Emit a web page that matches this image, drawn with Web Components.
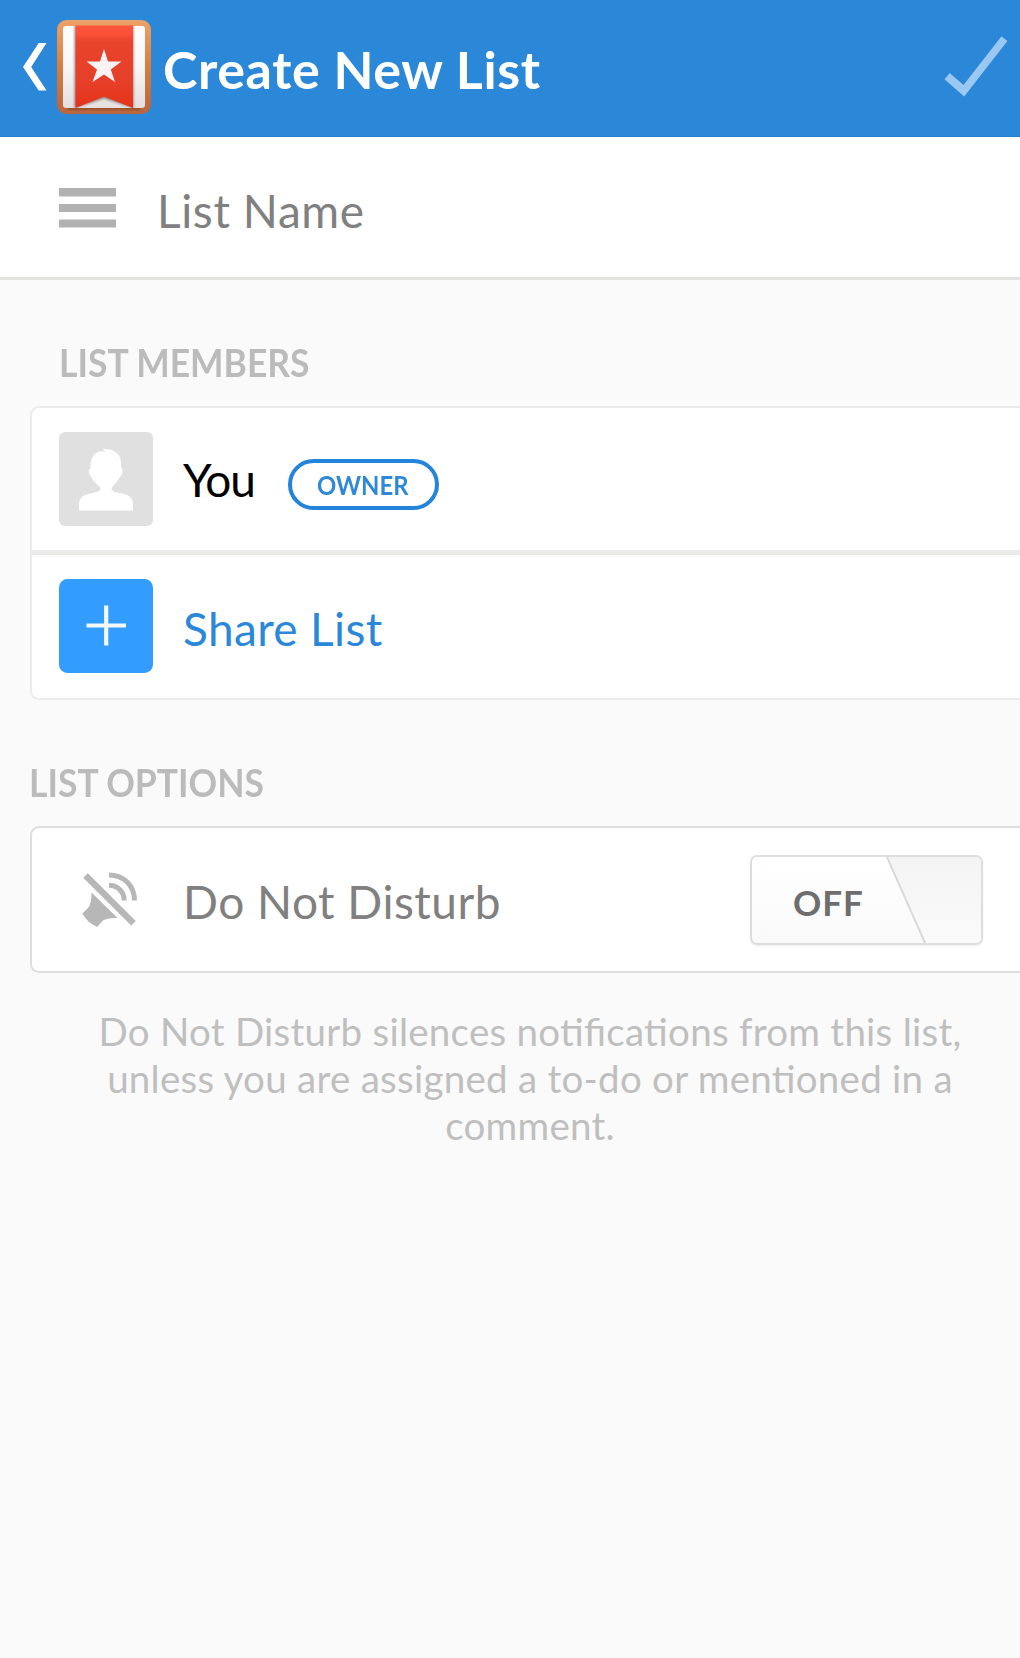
<!DOCTYPE html>
<html lang="en">
<head>
<meta charset="utf-8">
<title>Create New List</title>
<style>
    html, body { margin: 0; min-height: 100%; background: #fafafa; }
    body { font-family: Lato, "Liberation Sans", sans-serif; overflow: hidden; }
</style>
</head>
<body>
<create-list-page></create-list-page>

<script>
/** Small base: every element only supplies its own template. */
class BaseElement extends HTMLElement {
    constructor() {
        super();
        this.attachShadow({ mode: 'open' });
    }

    connectedCallback() {
        this.shadowRoot.innerHTML = this.template();
    }
}

/** Inline SVG icons: <list-icon name="menu"></list-icon> */
const ICONS = {
    back: `
        <svg width="24" height="48" viewBox="0 0 24 48">
            <path d="M15.700 0H23.500L8.200 24L23.500 47.500H15.700L0 24Z" fill="#fff"/>
        </svg>`,
    logo: `
        <svg width="94" height="94" viewBox="0 0 94 94">
            <defs>
                <linearGradient id="frame" x2="0" y2="1">
                    <stop offset="0" stop-color="#eda267"/>
                    <stop offset=".45" stop-color="#d98142"/>
                    <stop offset="1" stop-color="#b9643c"/>
                </linearGradient>
                <linearGradient id="paper" x2="0" y2="1">
                    <stop offset="0" stop-color="#fff"/>
                    <stop offset=".5" stop-color="#f8f6f6"/>
                    <stop offset="1" stop-color="#e5dfde"/>
                </linearGradient>
                <linearGradient id="ribbon" x2="0" y2="1">
                    <stop offset="0" stop-color="#fe563d"/>
                    <stop offset=".1" stop-color="#fb5139"/>
                    <stop offset=".2" stop-color="#e8432b"/>
                    <stop offset=".65" stop-color="#e7402a"/>
                    <stop offset="1" stop-color="#e5331b"/>
                </linearGradient>
                <filter id="soft" x="-20%" y="-20%" width="140%" height="140%">
                    <feGaussianBlur stdDeviation="1"/>
                </filter>
                <clipPath id="page"><rect x="6" y="6" width="82" height="82" rx="3"/></clipPath>
            </defs>
            <rect width="94" height="94" rx="9.500" fill="url(#frame)"/>
            <rect x="10" y="85" width="74" height="5" rx="2" fill="#8a4a2b" opacity=".7" filter="url(#soft)"/>
            <rect x="6" y="6" width="82" height="82" rx="3" fill="url(#paper)"/>
            <g clip-path="url(#page)">
                <path d="M17.500 5H76.500V88L47 78.500L17.500 88Z" fill="#4a2a26" opacity=".55" filter="url(#soft)"/>
            </g>
            <path d="M18.500 5.500H76V88L47 76.500L18.500 88Z" fill="url(#ribbon)"/>
            <path d="M47 29L51 41.500H64.500L53.800 49.500L58 62L47 54.500L35.500 62L40 49.500L29.500 41.500H43Z" fill="#faf3f3"/>
        </svg>`,
    check: `
        <svg width="64" height="62" viewBox="0 0 64 62">
            <path d="M0.500 43.200L5.700 37L19.500 49L57.500 0.200L63.400 5L20.200 60.500Z" fill="#9ac8f0"/>
        </svg>`,
    menu: `
        <svg width="57" height="40" viewBox="0 0 57 40">
            <path d="M0 0H57V8.500H0ZM0 16H57V24H0ZM0 31.500H57V39.500H0Z" fill="#b1b1b1"/>
        </svg>`,
    person: `
        <svg width="94" height="94" viewBox="0 0 94 94">
            <rect width="94" height="94" rx="6" fill="#e0e0e0"/>
            <path d="M43.500 16Q46 17.500 49 17.200C57 18 62 23.500 62 31Q62 34 62.300 36Q64 36.500 63.500 39.500Q63 43.500 61 44.500C58.500 50 54.500 53 52.500 56C52.500 58.500 55 60 60 61C68 62.500 74 64 74 73V78.500H20V73C20 64 26 62.500 34 61C39 60 41.500 58.500 41.500 56C39 52.500 34 49.500 32 44.500Q29.500 42.500 29.800 38.500Q30 37 31.500 36.500C31.500 32 31.500 27 35 23Q38 19 43.500 19.200Q46 19.500 47 19.800Q44.500 18.500 43.500 16Z" fill="#fff"/>
        </svg>`,
    plus: `
        <svg width="94" height="94" viewBox="0 0 94 94">
            <rect width="94" height="94" rx="8.500" fill="#339dff"/>
            <path d="M27.500 46.500H67M47.200 26.500V66.500" stroke="#f3f8fd" stroke-width="4.200"/>
        </svg>`,
    muted: `
        <svg width="56" height="56" viewBox="0 0 56 56" fill="none">
            <path d="M9.500 20.500L35.500 46C27 46 22 47 19.500 50L15 55Q10 52.500 6.500 49.500Q3 46 0.300 41.500L6 36Q9.500 32 9.500 20.500Z" fill="#b7b7b7"/>
            <path d="M3.500 3.500L51.500 51.300" stroke="#b7b7b7" stroke-width="6.500"/>
            <path d="M27 3C42 3 52.500 14 52.500 28.500M27 13.200C36 13.200 42.200 20 42.200 28.500" stroke="#b7b7b7" stroke-width="5"/>
        </svg>`
};

class ListIcon extends BaseElement {
    template() {
        return `
            <style>
                :host { display: block; flex: none; }
                svg { display: block; }
            </style>
            ${ICONS[this.getAttribute('name')] || ''}
        `;
    }
}

/** Blue top bar with back arrow, logo, title and confirm action. */
class AppHeader extends BaseElement {
    template() {
        return `
            <style>
                :host {
                    display: flex;
                    align-items: center;
                    box-sizing: border-box;
                    height: 137px;
                    padding: 0 12px 0 23px;
                    background: #2b88d9;
                    border-bottom: 1px solid #2482d6;
                    color: #fff;
                }
                .logo { margin: -2px 12px 0 10px; }
                .back { margin-top: -2px; }
                .check { margin-top: -2px; }
                h1 {
                    flex: 1;
                    margin: 2px 0 0;
                    font-size: 52px;
                    line-height: 60px;
                    font-weight: 700;
                    letter-spacing: 0.6px;
                    white-space: nowrap;
                }
            </style>
            <list-icon class="back" name="back"></list-icon>
            <list-icon class="logo" name="logo"></list-icon>
            <h1><slot></slot></h1>
            <list-icon class="check" name="check"></list-icon>
        `;
    }
}

/** Name input row under the header. */
class NameField extends BaseElement {
    template() {
        return `
            <style>
                :host {
                    display: flex;
                    align-items: center;
                    box-sizing: border-box;
                    height: 143px;
                    padding-left: 59px;
                    background: #fff;
                    border-bottom: 3px solid #e3e3e1;
                    color: #808080;
                    font-size: 46px;
                    line-height: 56px;
                    letter-spacing: 0.6px;
                }
                list-icon { margin: 2px 41px 0 0; }
                span { padding-top: 7px; }
            </style>
            <list-icon name="menu"></list-icon>
            <span><slot></slot></span>
        `;
    }
}

/** Section heading with a card that runs off the right edge. */
class ListSection extends BaseElement {
    template() {
        return `
            <style>
                :host { display: block; padding-left: 30px; }
                h2 {
                    margin: 0 0 0 var(--heading-indent, -1px);
                    font-size: 38px;
                    line-height: 46px;
                    font-weight: 700;
                    color: #bbb;
                    white-space: nowrap;
                    /* condensed caps */
                    transform: scaleX(.933);
                    transform-origin: 0 50%;
                }
                .card {
                    margin-top: 21px;
                    background: #fff;
                    border: 2px solid var(--card-border, #ebebeb);
                    border-right: 0;
                    border-radius: 9px 0 0 9px;
                }
            </style>
            <h2>${this.getAttribute('heading')}</h2>
            <div class="card"><slot></slot></div>
        `;
    }
}

class ListRow extends BaseElement {
    template() {
        return `
            <style>
                :host {
                    display: flex;
                    align-items: center;
                    box-sizing: border-box;
                    height: var(--row-height, 143px);
                    padding: 0 37px 0 27px;
                    font-size: 46px;
                    line-height: 56px;
                    color: #000;
                }
                :host([divided]) { border-bottom: 5px solid #ebebe9; }
                .icon {
                    display: flex;
                    justify-content: center;
                    width: 94px;
                    margin-right: 30px;
                }
                list-icon { margin: var(--icon-margin, 0); }
                .label {
                    padding-top: var(--label-drop, 5px);
                    letter-spacing: var(--label-spacing, 0.5px);
                    white-space: nowrap;
                }
                .end { margin-left: auto; }
            </style>
            <div class="icon"><list-icon name="${this.getAttribute('icon')}"></list-icon></div>
            <div class="label"><slot></slot></div>
            <slot name="badge"></slot>
            <div class="end"><slot name="end"></slot></div>
        `;
    }
}

class RoleBadge extends BaseElement {
    template() {
        return `
            <style>
                :host {
                    display: flex;
                    align-items: center;
                    justify-content: center;
                    box-sizing: border-box;
                    width: 151px;
                    height: 51px;
                    margin: 11px 0 0 33px;
                    border: 4px solid #2484dc;
                    border-radius: 26px;
                    color: #3088d9;
                    font-size: 26.500px;
                    line-height: 32px;
                    font-weight: 700;
                }
                span { transform: scaleX(.9); }
            </style>
            <span><slot></slot></span>
        `;
    }
}

/** Two-part switch with a slanted divider. */
class SlantToggle extends BaseElement {
    template() {
        return `
            <style>
                :host {
                    display: grid;
                    box-sizing: border-box;
                    width: 233px;
                    height: 90px;
                    margin-top: 1px;
                    border: 2px solid #dedede;
                    border-radius: 7px;
                    overflow: hidden;
                    background: linear-gradient(#fff, #fafafa);
                    box-shadow: 0 1px 2px rgba(0, 0, 0, .08);
                }
                svg, .state { grid-area: 1 / 1; }
                .state {
                    align-self: center;
                    padding: 3px 0 0 41px;
                    font-size: 35px;
                    line-height: 42px;
                    font-weight: 700;
                    letter-spacing: 1px;
                    color: #6e6e6e;
                }
            </style>
            <svg width="229" height="86" viewBox="0 0 229 86">
                <defs>
                    <linearGradient id="track" x2="0" y2="1">
                        <stop offset="0" stop-color="#f4f4f4"/>
                        <stop offset="1" stop-color="#fafafa"/>
                    </linearGradient>
                </defs>
                <path d="M135 0H229V86H173Z" fill="url(#track)"/>
                <path d="M134.500 -1L173.500 87" stroke="#d9d9d9" stroke-width="2"/>
            </svg>
            <div class="state"><slot></slot></div>
        `;
    }
}

class HelpText extends BaseElement {
    template() {
        return `
            <style>
                :host {
                    display: block;
                    padding: 0 45px 0 85px;
                    text-align: center;
                    font-size: 38.500px;
                    line-height: 47.200px;
                    letter-spacing: 0.26px;
                    /* keep the ligatures that letter-spacing turns off */
                    font-feature-settings: "liga" 1;
                    color: #bfbfbf;
                }
            </style>
            <slot></slot>
        `;
    }
}

class CreateListPage extends BaseElement {
    template() {
        return `
            <style>
                :host { display: block; width: 1020px; height: 1658px; background: #fafafa; }
                .members { margin-top: 59px; --heading-indent: 29px; }
                .options { margin-top: 59px; --card-border: #dedede; }
                .members list-row[divided] {
                    --row-height: 147px;
                    --label-spacing: -1.3px;
                    --label-drop: 1px;
                }
                .members list-row[icon="plus"] {
                    --icon-margin: -2px 0 0;
                    --label-spacing: 0.35px;
                }
                .options list-row { --icon-margin: 0 0 0 7px; }
                .share { color: #2b88d9; }
                .quiet { color: #808080; }
                help-text { margin-top: 35px; }
            </style>
            <app-header>Create New List</app-header>
            <name-field>List Name</name-field>
            <list-section class="members" heading="LIST MEMBERS">
                <list-row icon="person" divided>You<role-badge slot="badge">OWNER</role-badge></list-row>
                <list-row icon="plus"><span class="share">Share List</span></list-row>
            </list-section>
            <list-section class="options" heading="LIST OPTIONS">
                <list-row icon="muted"><span class="quiet">Do Not Disturb</span><slant-toggle slot="end">OFF</slant-toggle></list-row>
            </list-section>
            <help-text>Do Not Disturb silences notifications from this list, unless you are assigned a to-do or mentioned in a comment.</help-text>
        `;
    }
}

customElements.define('list-icon', ListIcon);
customElements.define('app-header', AppHeader);
customElements.define('name-field', NameField);
customElements.define('list-section', ListSection);
customElements.define('list-row', ListRow);
customElements.define('role-badge', RoleBadge);
customElements.define('slant-toggle', SlantToggle);
customElements.define('help-text', HelpText);
customElements.define('create-list-page', CreateListPage);
</script>
</body>
</html>
